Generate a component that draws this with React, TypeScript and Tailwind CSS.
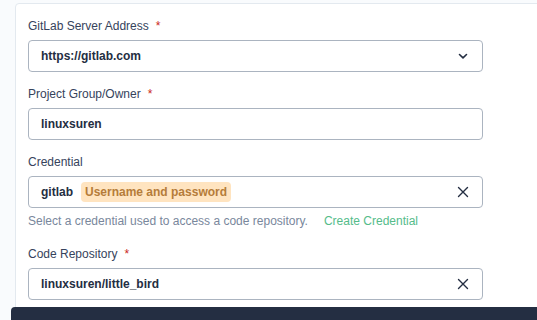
import React from 'react';

const font = { fontFamily: '"Liberation Sans", Arial, sans-serif' };

function Label({ text, required }: { text: string; required?: boolean }) {
  return (
    <div className="flex items-center h-5 text-xs text-[#36435c]">
      {text}
      {required && <span className="ml-[7px] text-[#ca2621]">*</span>}
    </div>
  );
}

function Chevron() {
  return (
    <svg width="12" height="12" viewBox="0 0 12 12" fill="none" className="text-[#242e42]">
      <path d="M2.5 4.5 6 7.8 9.5 4.5" stroke="currentColor" strokeWidth="1.6" strokeLinecap="round" strokeLinejoin="round" />
    </svg>
  );
}

function Cross() {
  return (
    <svg width="12" height="12" viewBox="0 0 12 12" fill="none" className="text-[#242e42]">
      <path d="M1.5 1.5 10.5 10.5 M10.5 1.5 1.5 10.5" stroke="currentColor" strokeWidth="1.4" strokeLinecap="round" />
    </svg>
  );
}

function Field({ children, icon }: { children: React.ReactNode; icon?: React.ReactNode }) {
  return (
    <div className="mt-1 flex items-center justify-between w-[455px] h-8 pl-3 pr-[13px] rounded border border-[#abb4c0] bg-white">
      <div className="flex items-center gap-2 text-xs font-bold text-[#242e42]">{children}</div>
      {icon}
    </div>
  );
}

export default function App() {
  return (
    <div className="relative h-[320px] overflow-hidden bg-[#f9fbfd]" style={font}>
      <div className="ml-[15px] mt-[3px] w-[600px] rounded border border-[#e3e9ef] bg-white px-3 pt-3 pb-6">
        <div>
          <Label text="GitLab Server Address" required />
          <Field icon={<Chevron />}>https://gitlab.com</Field>
        </div>

        <div className="mt-3">
          <Label text="Project Group/Owner" required />
          <Field>linuxsuren</Field>
        </div>

        <div className="mt-3">
          <Label text="Credential" />
          <Field icon={<Cross />}>
            <span>gitlab</span>
            <span className="rounded-sm bg-[#ffe4c0] px-1 leading-5 text-[#b57c3a]">Username and password</span>
          </Field>
          <div className="mt-[3px] flex items-center h-5 text-xs text-[#79879c]">
            Select a credential used to access a code repository.
            <span className="ml-4 text-[#55bc8a]">Create Credential</span>
          </div>
        </div>

        <div className="mt-[13px]">
          <Label text="Code Repository" required />
          <Field icon={<Cross />}>linuxsuren/little_bird</Field>
        </div>
      </div>

      <div className="absolute left-[11px] right-0 top-[307px] h-10 rounded-tl bg-[#242e42]" />
    </div>
  );
}
